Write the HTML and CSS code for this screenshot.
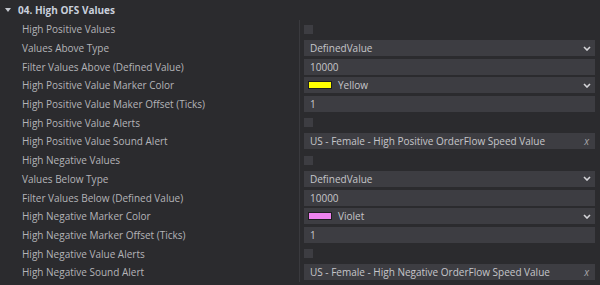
FILE: index.html
```html
<!DOCTYPE html>
<html>
<head>
<meta charset="utf-8">
<link rel="stylesheet" href="styles.css">
</head>
<body>
<div class="panel">
  <div class="group-header">
    <svg class="caret" width="6" height="4" viewBox="0 0 6 4"><path d="M0 0H6L3 4Z" fill="#c4c8d0"/></svg>
    <span class="group-title">04. High OFS Values</span>
  </div>
  <div class="grid">
    <div class="label">High Positive Values</div>
    <div class="value"><span class="checkbox"></span></div>

    <div class="label">Values Above Type</div>
    <div class="value"><div class="input select"><span class="text">DefinedValue</span><svg class="chev" width="8" height="5" viewBox="0 0 8 5"><path d="M1 1L4 4L7 1" fill="none" stroke="#d4d4d8" stroke-width="1.6"/></svg></div></div>

    <div class="label">Filter Values Above (Defined Value)</div>
    <div class="value"><div class="input"><span class="text">10000</span></div></div>

    <div class="label">High Positive Value Marker Color</div>
    <div class="value"><div class="input select color"><span class="swatch yellow"></span><span class="text">Yellow</span><svg class="chev" width="8" height="5" viewBox="0 0 8 5"><path d="M1 1L4 4L7 1" fill="none" stroke="#d4d4d8" stroke-width="1.6"/></svg></div></div>

    <div class="label">High Positive Value Maker Offset (Ticks)</div>
    <div class="value"><div class="input"><span class="text">1</span></div></div>

    <div class="label">High Positive Value Alerts</div>
    <div class="value"><span class="checkbox"></span></div>

    <div class="label">High Positive Value Sound Alert</div>
    <div class="value"><div class="input select"><span class="text">US - Female - High Positive OrderFlow Speed Value</span><span class="clear">x</span></div></div>

    <div class="label">High Negative Values</div>
    <div class="value"><span class="checkbox"></span></div>

    <div class="label">Values Below Type</div>
    <div class="value"><div class="input select"><span class="text">DefinedValue</span><svg class="chev" width="8" height="5" viewBox="0 0 8 5"><path d="M1 1L4 4L7 1" fill="none" stroke="#d4d4d8" stroke-width="1.6"/></svg></div></div>

    <div class="label">Filter Values Below (Defined Value)</div>
    <div class="value"><div class="input"><span class="text">10000</span></div></div>

    <div class="label">High Negative Marker Color</div>
    <div class="value"><div class="input select color"><span class="swatch violet"></span><span class="text">Violet</span><svg class="chev" width="8" height="5" viewBox="0 0 8 5"><path d="M1 1L4 4L7 1" fill="none" stroke="#d4d4d8" stroke-width="1.6"/></svg></div></div>

    <div class="label">High Negative Marker Offset (Ticks)</div>
    <div class="value"><div class="input"><span class="text">1</span></div></div>

    <div class="label">High Negative Value Alerts</div>
    <div class="value"><span class="checkbox"></span></div>

    <div class="label">High Negative Sound Alert</div>
    <div class="value"><div class="input select"><span class="text">US - Female - High Negative OrderFlow Speed Value</span><span class="clear">x</span></div></div>
  </div>
</div>
</body>
</html>
```
FILE: styles.css
```css
html, body {
  margin: 0;
  padding: 0;
  background: #2b2b2e;
}
.panel {
  width: 600px;
  height: 285px;
  overflow: hidden;
  background: #2b2b2e;
  font-family: "Open Sans", sans-serif;
  font-size: 10px;
  color: #b4b4b8;
}
.group-header {
  height: 20px;
  display: flex;
  align-items: center;
  padding-left: 5px;
  gap: 7px;
}
.caret {
  display: block;
}
.group-title {
  font-weight: bold;
  color: #c9d0dc;
  font-size: 10px;
}
.grid {
  display: grid;
  grid-template-columns: 299px 1fr;
  grid-auto-rows: 18.7px;
}
.label {
  display: flex;
  align-items: center;
  padding-left: 22px;
  white-space: nowrap;
}
.value {
  display: flex;
  align-items: center;
  border-left: 1px solid #3a3a3e;
  padding-left: 4px;
  padding-right: 5px;
}
.checkbox {
  width: 9px;
  height: 9px;
  background: #3d3d42;
  display: block;
}
.input {
  flex: 1;
  height: 16px;
  background: #3d3d42;
  display: flex;
  align-items: center;
  padding-left: 6px;
  padding-right: 4px;
  color: #c6c6ca;
  white-space: nowrap;
}
.input .text {
  flex: 1;
}
.input.color {
  padding-left: 4px;
}
.swatch {
  width: 22px;
  height: 6px;
  border: 1px solid #1e1e20;
  margin-right: 6px;
  display: block;
}
.swatch.yellow { background: #ffff00; }
.swatch.violet { background: #ee82ee; }
.chev {
  display: block;
}
.clear {
  font-style: italic;
  color: #a8a8ac;
  margin-right: 2px;
}
```
